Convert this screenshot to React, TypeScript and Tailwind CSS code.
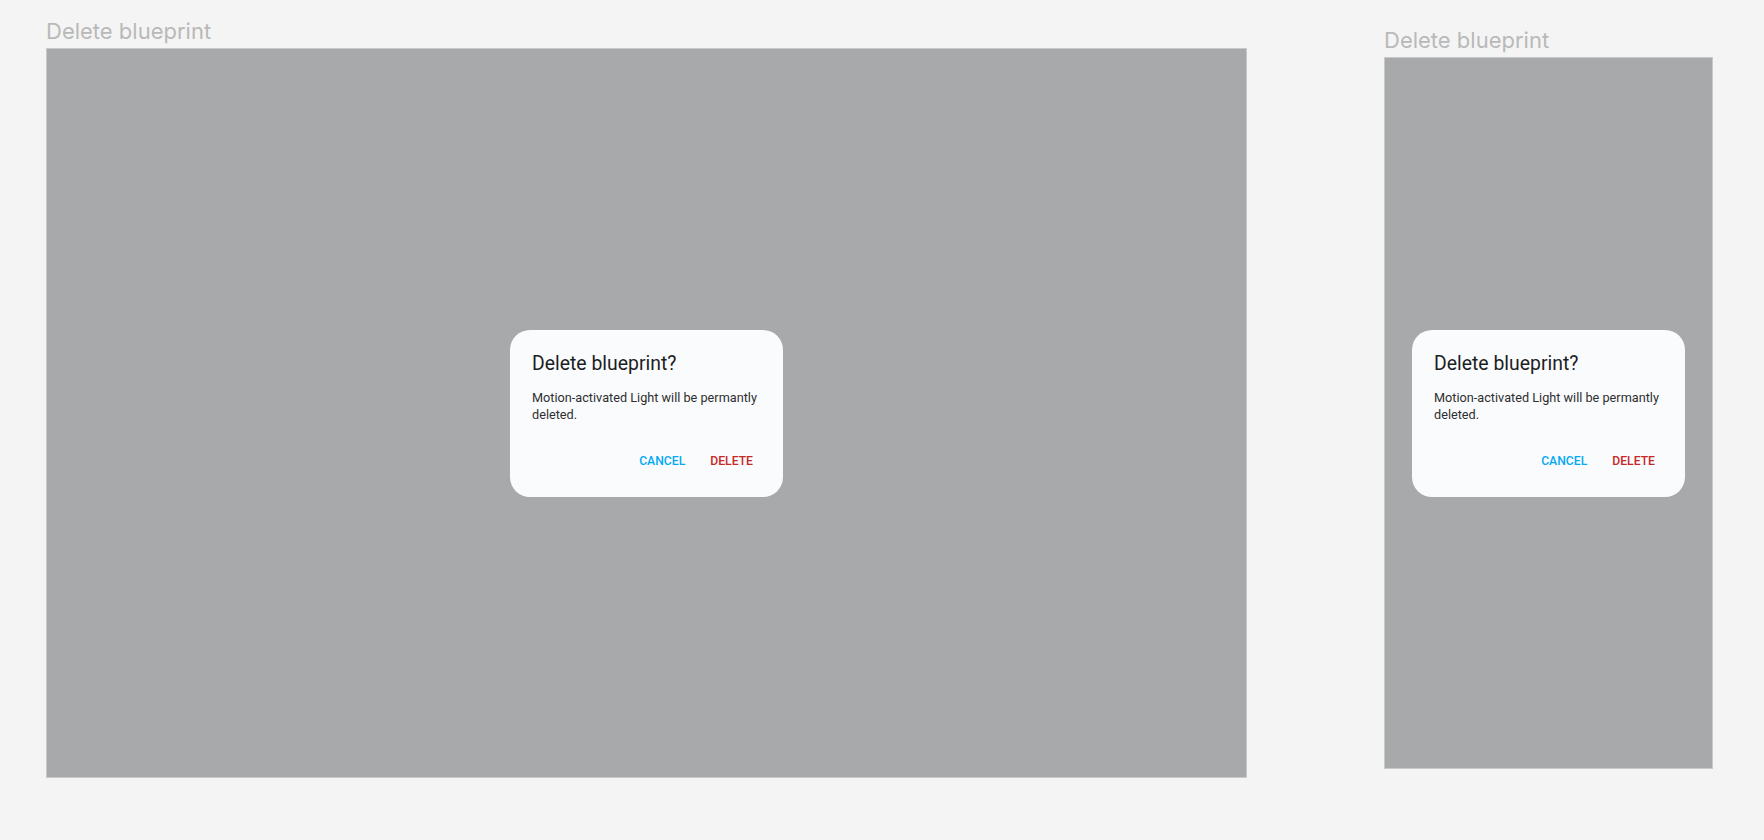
import React from "react";

type FrameProps = {
  title: string;
  width: string;
  height: string;
  offset: string;
};

function ConfirmDialog() {
  return (
    <div
      className="w-[273px] rounded-[20px] bg-[#fafbfd] px-[22px] pt-[22px] pb-[17px]"
      style={{ fontFamily: "Roboto, 'Noto Sans', sans-serif" }}
    >
      <h2 className="text-[19.4px] leading-[24px] text-[#1d1d1f]">Delete blueprint?</h2>
      <p className="mt-[13px] text-[12.7px] leading-[17px] text-[#2e2e30]">
        Motion-activated Light will be permantly deleted.
      </p>
      <div className="mt-[21px] flex justify-end">
        <button className="h-9 px-2 text-[12.2px] font-medium text-[#03a9f4]">CANCEL</button>
        <button className="ml-[9px] h-9 px-2 text-[12.2px] font-medium text-[#c62828]">DELETE</button>
      </div>
    </div>
  );
}

function Frame({ title, width, height, offset }: FrameProps) {
  return (
    <div className={`flex flex-col ${offset}`}>
      <div
        className="h-[26px] text-[22px] leading-[26px] text-[#b9b9b9]"
        style={{ fontFamily: "Inter, 'Noto Sans', sans-serif" }}
      >
        {title}
      </div>
      <div
        className={`mt-[4px] flex items-center justify-center border border-[#c9c9ca] bg-[#a8a9aa] ${width} ${height}`}
      >
        <ConfirmDialog />
      </div>
    </div>
  );
}

export default function App() {
  return (
    <div className="flex min-h-[840px] w-full items-start gap-[137px] bg-[#f4f4f4] pt-[18px] pl-[46px]">
      <Frame title="Delete blueprint" width="w-[1201px]" height="h-[730px]" offset="mt-0" />
      <Frame title="Delete blueprint" width="w-[329px]" height="h-[712px]" offset="mt-[9px]" />
    </div>
  );
}
